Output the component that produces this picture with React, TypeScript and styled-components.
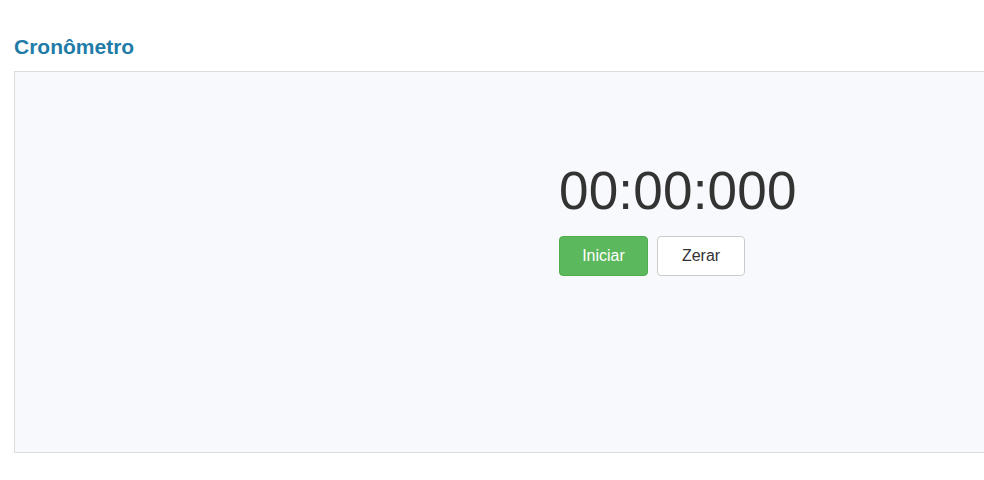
import React from "react";
import styled, { createGlobalStyle } from "styled-components";

const Global = createGlobalStyle`
  html, body { margin: 0; padding: 0; background: #ffffff; }
  body { font-family: "Liberation Sans", Arial, sans-serif; overflow: hidden; }
  #root { width: 984px; overflow: hidden; }
`;

const Page = styled.div`
  padding: 35px 0 0 14px;
`;

const Title = styled.h2`
  margin: 0 0 12px 0;
  font-size: 21px;
  line-height: 24px;
  font-weight: 700;
  color: #1f7ca8;
`;

const Panel = styled.div`
  box-sizing: border-box;
  height: 382px;
  width: 1060px;
  border: 1px solid #dcdcdc;
  background: #f8f9fc;
  padding: 88px 0 0 544px;
  display: flex;
  flex-direction: column;
  align-items: flex-start;
`;

const Clock = styled.div`
  font-size: 53px;
  line-height: 61px;
  color: #333333;
  letter-spacing: 0.2px;
`;

const Buttons = styled.div`
  display: flex;
  gap: 9px;
  margin-top: 15px;
`;

const Button = styled.button<{ $primary?: boolean }>`
  box-sizing: border-box;
  height: 40px;
  width: ${(p) => (p.$primary ? "89px" : "88px")};
  border-radius: 4px;
  border: 1px solid ${(p) => (p.$primary ? "#4cae4c" : "#cccccc")};
  background: ${(p) => (p.$primary ? "#5cb85c" : "#ffffff")};
  color: ${(p) => (p.$primary ? "#ffffff" : "#333333")};
  font-family: "Liberation Sans", Arial, sans-serif;
  font-size: 16px;
  padding: 0;
  cursor: pointer;
`;

export default function App() {
  return (
    <>
      <Global />
      <Page>
        <Title>Cronômetro</Title>
        <Panel>
          <Clock>00:00:000</Clock>
          <Buttons>
            <Button $primary>Iniciar</Button>
            <Button>Zerar</Button>
          </Buttons>
        </Panel>
      </Page>
    </>
  );
}
